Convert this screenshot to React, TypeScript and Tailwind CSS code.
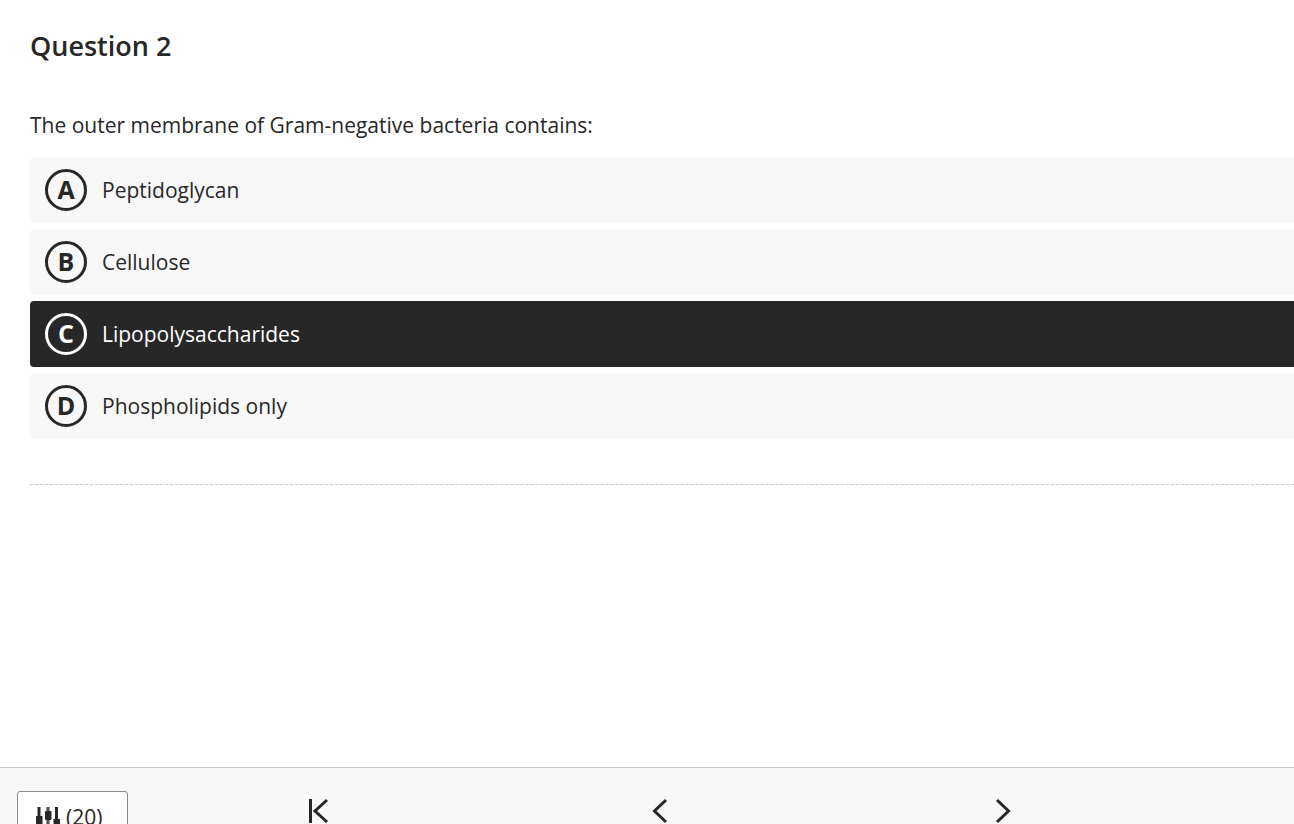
const options = [
  { letter: 'A', text: 'Peptidoglycan' },
  { letter: 'B', text: 'Cellulose' },
  { letter: 'C', text: 'Lipopolysaccharides', selected: true },
  { letter: 'D', text: 'Phospholipids only' },
];

function Option({ letter, text, selected }: { letter: string; text: string; selected?: boolean }) {
  return (
    <div
      className={`flex h-[66px] items-center rounded-l-[4px] pl-[15px] ${
        selected ? 'bg-[#272727] text-white' : 'bg-[#f8f8f8] text-[#272727]'
      }`}
    >
      <span
        className={`flex h-[42px] w-[42px] items-center justify-center rounded-full border-[3px] text-[25px] font-bold ${
          selected ? 'border-white' : 'border-[#272727]'
        }`}
      >
        {letter}
      </span>
      <span className="ml-[15px] pt-[2px] text-[21px]">{text}</span>
    </div>
  );
}

// three sliders, the knob sits lower on each bar from left to right
function TubesIcon() {
  return (
    <svg width="24" height="17" viewBox="0 0 24 17" fill="#272727" className="mt-[2px] shrink-0">
      <rect x="1.500" y="0" width="3" height="10" />
      <rect x="0" y="9" width="6.500" height="8" rx="0.500" />
      <rect x="10.500" y="0" width="3" height="17" />
      <rect x="9" y="4" width="6.500" height="9" rx="1" />
      <rect x="19" y="0" width="3" height="13" />
      <rect x="17.500" y="12" width="6.500" height="5" rx="0.500" />
      <rect x="11.500" y="0" width="1" height="4" fill="#8a8a8a" />
      <rect x="11.500" y="13" width="1" height="4" fill="#8a8a8a" />
    </svg>
  );
}

function NavIcon({ children, className }: { children: React.ReactNode; className: string }) {
  return (
    <svg
      width="20"
      height="28"
      viewBox="0 0 20 28"
      fill="none"
      stroke="#272727"
      strokeWidth="3"
      className={`mt-[6px] shrink-0 ${className}`}
    >
      {children}
    </svg>
  );
}

export default function App() {
  return (
    <div className="flex h-[824px] w-[1294px] flex-col overflow-hidden bg-white font-['Open_Sans',sans-serif] text-[#272727]">
      <main className="flex-1 pl-[30px]">
        <h1 className="pt-[28px] text-[27px] leading-[36px] font-semibold">Question 2</h1>
        <p className="mt-[46px] text-[21px] leading-[30px]">The outer membrane of Gram-negative bacteria contains:</p>
        <div className="mt-[17px] flex flex-col gap-[6px]">
          {options.map((o) => (
            <Option key={o.letter} {...o} />
          ))}
        </div>
        <div className="mt-[45px] border-t border-dashed border-[#cccccc]" />
      </main>
      <footer className="flex h-[57px] items-start border-t border-[#cccccc] bg-[#f8f8f8] pt-[23px] pl-[17px]">
        <button className="flex h-[60px] w-[111px] shrink-0 items-start gap-[6px] rounded-[3px] border border-[#8a8a8a] bg-white pt-[13px] pl-[18px] text-[21px] leading-[24px]">
          <TubesIcon />
          <span>(20)</span>
        </button>
        <NavIcon className="ml-[181px]">
          <path d="M1.500 2v24M18 3 6 14l12 11" />
        </NavIcon>
        <NavIcon className="ml-[322px]">
          <path d="M15 3 3.500 14 15 25" />
        </NavIcon>
        <NavIcon className="ml-[321px]">
          <path d="M5 3l11.500 11L5 25" />
        </NavIcon>
      </footer>
    </div>
  );
}
